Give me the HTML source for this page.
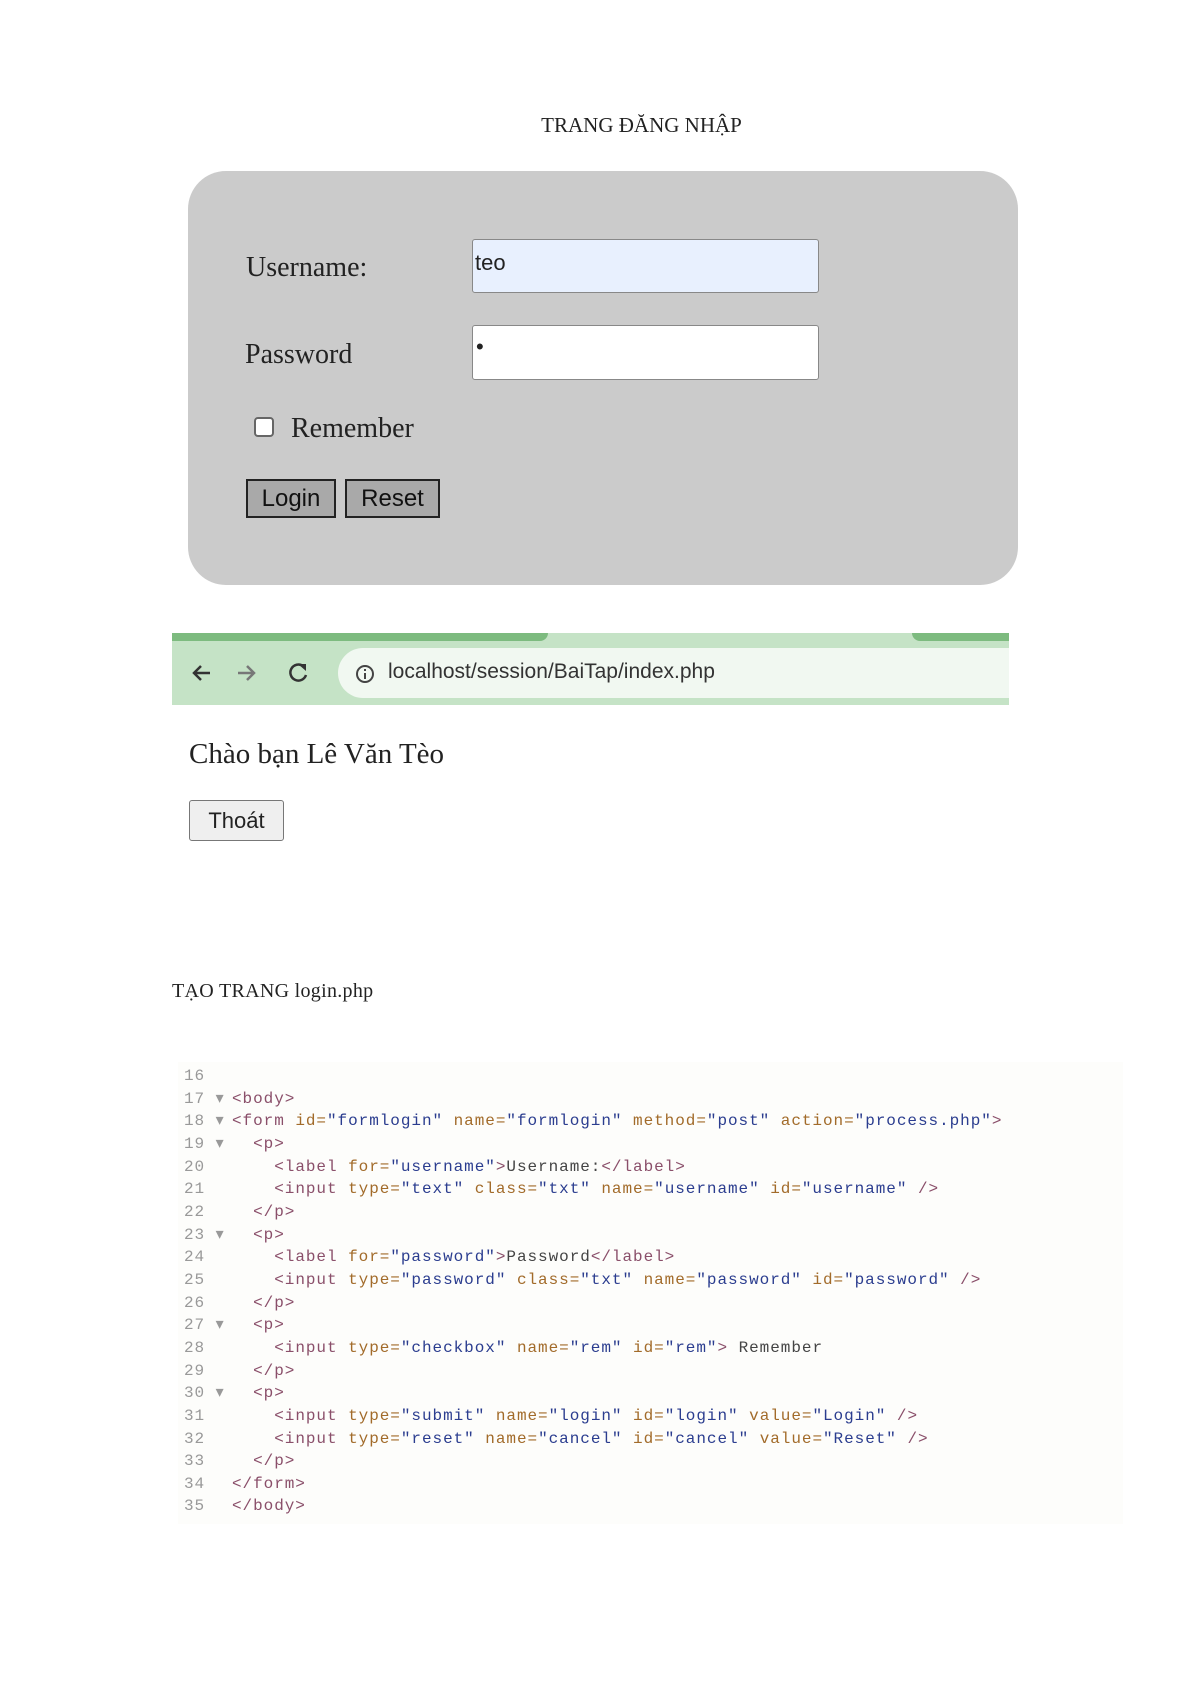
<!DOCTYPE html>
<html><head><meta charset="utf-8">
<style>
body{margin:0;width:1200px;height:1696px;background:#fff;position:relative;font-family:"Liberation Serif",serif;color:#222;overflow:hidden}
.a{position:absolute}
.box{left:188px;top:171px;width:830px;height:414px;background:#cbcbcb;border-radius:38px}
.lbl{font-size:28px;color:#222}
.inp{border:1px solid #888;border-radius:3px;background:#fff;font-family:"Liberation Sans",sans-serif;font-size:22px;box-sizing:border-box}
.btn{font-family:"Liberation Sans",sans-serif;font-size:24px;background:#a9a9a9;border:2px solid #222;box-sizing:border-box;text-align:center;line-height:35px;color:#111}
.code{font-family:"Liberation Mono",monospace;font-size:16px;letter-spacing:0.95px;white-space:pre;line-height:22.65px;color:#555}
.ln{color:#999}
.t{color:#8a4f6a}.at{color:#a26b2a}.v{color:#2b3d8f}.tx{color:#444}
</style></head><body>
<div class="a" style="left:0;width:1283px;top:113px;text-align:center;font-size:21px">TRANG ĐĂNG NHẬP</div>
<div class="a box"></div>
<div class="a lbl" style="left:246px;top:252px">Username:</div>
<div class="a inp" style="left:472px;top:239px;width:347px;height:54px;background:#e8f0fe;padding:10px 2px">teo</div>
<div class="a lbl" style="left:245px;top:339px">Password</div>
<div class="a inp" style="left:472px;top:325px;width:347px;height:55px;padding:8px 3px">•</div>
<div class="a" style="left:254px;top:417px;width:20px;height:20px;border:2px solid #666;border-radius:4px;background:#fff;box-sizing:border-box"></div>
<div class="a lbl" style="left:291px;top:413px">Remember</div>
<div class="a btn" style="left:246px;top:479px;width:90px;height:39px">Login</div>
<div class="a btn" style="left:345px;top:479px;width:95px;height:39px">Reset</div>

<div class="a" style="left:172px;top:633px;width:837px;height:72px;background:#c5e3c6"></div>
<div class="a" style="left:172px;top:633px;width:376px;height:8px;background:#7dbb7f;border-radius:0 0 8px 0"></div>
<div class="a" style="left:912px;top:633px;width:97px;height:8px;background:#7dbb7f;border-radius:0 0 0 8px"></div>
<div class="a" style="left:338px;top:648px;width:671px;height:50px;background:#f1f8f1;border-radius:25px 0 0 25px"></div>
<svg class="a" style="left:190px;top:660px" width="140" height="26" viewBox="0 0 140 26">
<path d="M20 13H4M11 6L4 13L11 20" stroke="#333" stroke-width="2.5" fill="none"/>
<path d="M48 13H64M57 6L64 13L57 20" stroke="#777" stroke-width="2.5" fill="none"/>
<path d="M113 6A8 8 0 1 0 116 15" stroke="#333" stroke-width="2.5" fill="none"/><path d="M108 4L116 4L116 11Z" fill="#333"/>
</svg>
<svg class="a" style="left:354px;top:663px" width="22" height="22"><circle cx="11" cy="11" r="8" stroke="#444" stroke-width="2" fill="none"/><path d="M11 10V16M11 6V8" stroke="#444" stroke-width="2"/></svg>
<div class="a" style="left:388px;top:660px;font-family:'Liberation Sans',sans-serif;font-size:21px;color:#333">localhost/session/BaiTap/index.php</div>

<div class="a" style="left:189px;top:738px;font-size:29px">Chào bạn Lê Văn Tèo</div>
<div class="a" style="left:189px;top:800px;width:95px;height:41px;border:1px solid #777;border-radius:3px;background:#efefef;box-sizing:border-box;font-family:'Liberation Sans',sans-serif;font-size:22px;text-align:center;line-height:39px">Thoát</div>

<div class="a" style="left:172px;top:980px;font-size:20px;letter-spacing:0.3px">TẠO TRANG login.php</div>

<div class="a" style="left:178px;top:1062px;width:945px;height:462px;background:#fdfdfb"></div>
<div class="a code" style="left:184px;top:1065px"><span class="ln">16
17 ▾
18 ▾
19 ▾
20
21
22
23 ▾
24
25
26
27 ▾
28
29
30 ▾
31
32
33
34
35</span></div>
<div class="a code" style="left:232px;top:1065px">
<span class="t">&lt;body&gt;</span>
<span class="t">&lt;form</span> <span class="at">id=</span><span class="v">"formlogin"</span> <span class="at">name=</span><span class="v">"formlogin"</span> <span class="at">method=</span><span class="v">"post"</span> <span class="at">action=</span><span class="v">"process.php"</span><span class="t">&gt;</span>
  <span class="t">&lt;p&gt;</span>
    <span class="t">&lt;label</span> <span class="at">for=</span><span class="v">"username"</span><span class="t">&gt;</span><span class="tx">Username:</span><span class="t">&lt;/label&gt;</span>
    <span class="t">&lt;input</span> <span class="at">type=</span><span class="v">"text"</span> <span class="at">class=</span><span class="v">"txt"</span> <span class="at">name=</span><span class="v">"username"</span> <span class="at">id=</span><span class="v">"username"</span> <span class="t">/&gt;</span>
  <span class="t">&lt;/p&gt;</span>
  <span class="t">&lt;p&gt;</span>
    <span class="t">&lt;label</span> <span class="at">for=</span><span class="v">"password"</span><span class="t">&gt;</span><span class="tx">Password</span><span class="t">&lt;/label&gt;</span>
    <span class="t">&lt;input</span> <span class="at">type=</span><span class="v">"password"</span> <span class="at">class=</span><span class="v">"txt"</span> <span class="at">name=</span><span class="v">"password"</span> <span class="at">id=</span><span class="v">"password"</span> <span class="t">/&gt;</span>
  <span class="t">&lt;/p&gt;</span>
  <span class="t">&lt;p&gt;</span>
    <span class="t">&lt;input</span> <span class="at">type=</span><span class="v">"checkbox"</span> <span class="at">name=</span><span class="v">"rem"</span> <span class="at">id=</span><span class="v">"rem"</span><span class="t">&gt;</span> <span class="tx">Remember</span>
  <span class="t">&lt;/p&gt;</span>
  <span class="t">&lt;p&gt;</span>
    <span class="t">&lt;input</span> <span class="at">type=</span><span class="v">"submit"</span> <span class="at">name=</span><span class="v">"login"</span> <span class="at">id=</span><span class="v">"login"</span> <span class="at">value=</span><span class="v">"Login"</span> <span class="t">/&gt;</span>
    <span class="t">&lt;input</span> <span class="at">type=</span><span class="v">"reset"</span> <span class="at">name=</span><span class="v">"cancel"</span> <span class="at">id=</span><span class="v">"cancel"</span> <span class="at">value=</span><span class="v">"Reset"</span> <span class="t">/&gt;</span>
  <span class="t">&lt;/p&gt;</span>
<span class="t">&lt;/form&gt;</span>
<span class="t">&lt;/body&gt;</span></div>
</body></html>
